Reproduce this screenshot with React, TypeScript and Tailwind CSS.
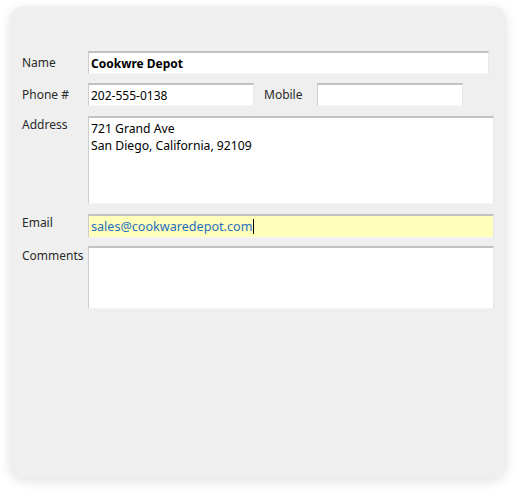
const field =
  "bg-white border-t-2 border-t-[#c2c2c2] border-l border-l-[#cdcdcd] border-r border-r-[#e6e6e6] border-b border-b-[#f4f4f4]";

export default function App() {
  return (
    <div
      className="w-[516px] h-[490px] bg-white pt-[6px] pl-[10px] text-[12px] text-[#1e1e1e]"
      style={{ fontFamily: '"Noto Sans", "Open Sans", sans-serif' }}
    >
      <div className="w-[496px] h-[472px] rounded-[14px] bg-[#efefef] shadow-[0_3px_12px_rgba(0,0,0,0.12)] pt-[45px] pl-[12px] flex flex-col">
        {/* Name */}
        <div className="flex items-center h-[23px]">
          <div className="w-[66px] text-[#2a2a2a] pt-[1px]">Name</div>
          <div className={`${field} w-[401px] h-[23px] px-[2px] font-bold leading-[21px] text-black`}>
            Cookwre Depot
          </div>
        </div>

        {/* Phone / Mobile */}
        <div className="flex items-center h-[23px] mt-[9px]">
          <div className="w-[66px] text-[#2a2a2a] pt-[1px]">Phone #</div>
          <div className={`${field} w-[166px] h-[23px] px-[2px] leading-[21px] text-black`}>202-555-0138</div>
          <div className="ml-[10px] w-[53px] text-[#2a2a2a] pt-[1px]">Mobile</div>
          <div className={`${field} w-[146px] h-[23px]`} />
        </div>

        {/* Address */}
        <div className="flex items-start mt-[10px]">
          <div className="w-[66px] text-[#2a2a2a] leading-[16px] pt-[1px]">Address</div>
          <div className={`${field} w-[406px] h-[88px] px-[2px] pt-[2px] leading-[17px] text-black text-[12.2px]`}>
            <div>721 Grand Ave</div>
            <div>San Diego, California, 92109</div>
          </div>
        </div>

        {/* Email */}
        <div className="flex items-start mt-[10px]">
          <div className="w-[66px] text-[#2a2a2a] leading-[16px] pt-[1px]">Email</div>
          <div className={`${field} !bg-[#ffffbb] w-[406px] h-[24px] px-[2px] leading-[21px] text-[12.6px] text-[#1f6fc0] flex items-center`}>
            <span>sales@cookwaredepot.com</span>
            <span className="w-px h-[15px] bg-black ml-px" />
          </div>
        </div>

        {/* Comments */}
        <div className="flex items-start mt-[8px]">
          <div className="w-[66px] text-[#2a2a2a] leading-[16px] pt-[2px]">Comments</div>
          <div className={`${field} w-[406px] h-[63px]`} />
        </div>
      </div>
    </div>
  );
}
